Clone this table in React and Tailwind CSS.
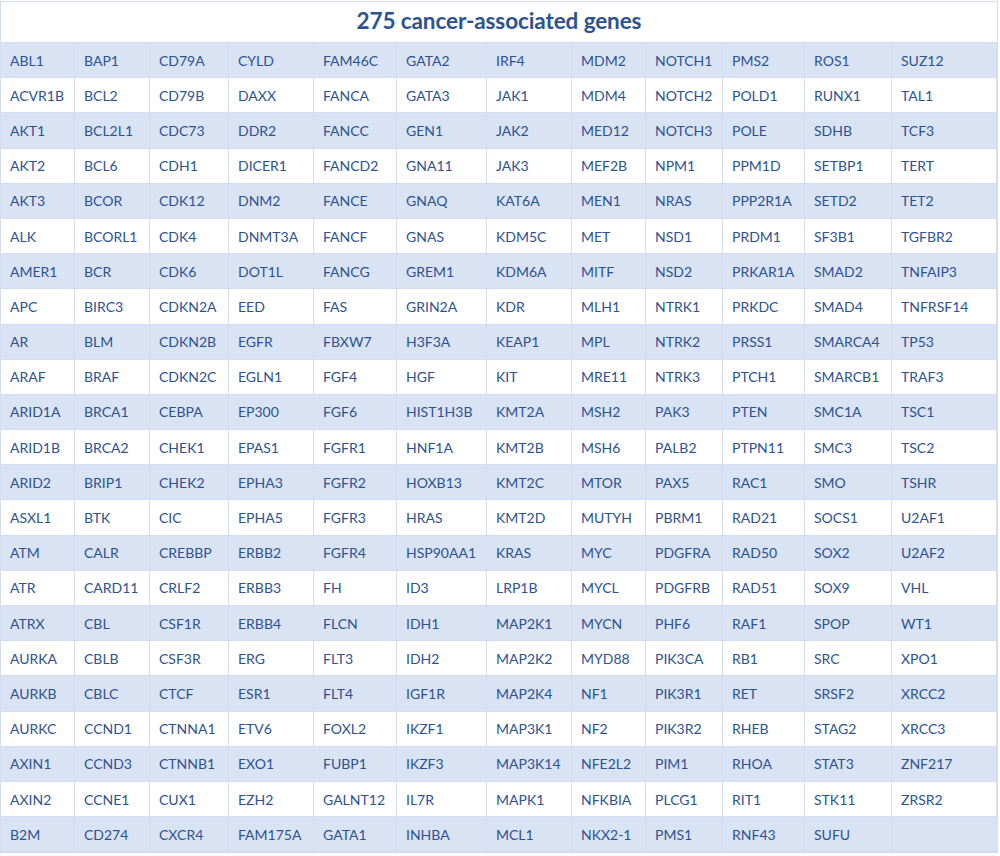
const genes = `ABL1 BAP1 CD79A CYLD FAM46C GATA2 IRF4 MDM2 NOTCH1 PMS2 ROS1 SUZ12
ACVR1B BCL2 CD79B DAXX FANCA GATA3 JAK1 MDM4 NOTCH2 POLD1 RUNX1 TAL1
AKT1 BCL2L1 CDC73 DDR2 FANCC GEN1 JAK2 MED12 NOTCH3 POLE SDHB TCF3
AKT2 BCL6 CDH1 DICER1 FANCD2 GNA11 JAK3 MEF2B NPM1 PPM1D SETBP1 TERT
AKT3 BCOR CDK12 DNM2 FANCE GNAQ KAT6A MEN1 NRAS PPP2R1A SETD2 TET2
ALK BCORL1 CDK4 DNMT3A FANCF GNAS KDM5C MET NSD1 PRDM1 SF3B1 TGFBR2
AMER1 BCR CDK6 DOT1L FANCG GREM1 KDM6A MITF NSD2 PRKAR1A SMAD2 TNFAIP3
APC BIRC3 CDKN2A EED FAS GRIN2A KDR MLH1 NTRK1 PRKDC SMAD4 TNFRSF14
AR BLM CDKN2B EGFR FBXW7 H3F3A KEAP1 MPL NTRK2 PRSS1 SMARCA4 TP53
ARAF BRAF CDKN2C EGLN1 FGF4 HGF KIT MRE11 NTRK3 PTCH1 SMARCB1 TRAF3
ARID1A BRCA1 CEBPA EP300 FGF6 HIST1H3B KMT2A MSH2 PAK3 PTEN SMC1A TSC1
ARID1B BRCA2 CHEK1 EPAS1 FGFR1 HNF1A KMT2B MSH6 PALB2 PTPN11 SMC3 TSC2
ARID2 BRIP1 CHEK2 EPHA3 FGFR2 HOXB13 KMT2C MTOR PAX5 RAC1 SMO TSHR
ASXL1 BTK CIC EPHA5 FGFR3 HRAS KMT2D MUTYH PBRM1 RAD21 SOCS1 U2AF1
ATM CALR CREBBP ERBB2 FGFR4 HSP90AA1 KRAS MYC PDGFRA RAD50 SOX2 U2AF2
ATR CARD11 CRLF2 ERBB3 FH ID3 LRP1B MYCL PDGFRB RAD51 SOX9 VHL
ATRX CBL CSF1R ERBB4 FLCN IDH1 MAP2K1 MYCN PHF6 RAF1 SPOP WT1
AURKA CBLB CSF3R ERG FLT3 IDH2 MAP2K2 MYD88 PIK3CA RB1 SRC XPO1
AURKB CBLC CTCF ESR1 FLT4 IGF1R MAP2K4 NF1 PIK3R1 RET SRSF2 XRCC2
AURKC CCND1 CTNNA1 ETV6 FOXL2 IKZF1 MAP3K1 NF2 PIK3R2 RHEB STAG2 XRCC3
AXIN1 CCND3 CTNNB1 EXO1 FUBP1 IKZF3 MAP3K14 NFE2L2 PIM1 RHOA STAT3 ZNF217
AXIN2 CCNE1 CUX1 EZH2 GALNT12 IL7R MAPK1 NFKBIA PLCG1 RIT1 STK11 ZRSR2
B2M CD274 CXCR4 FAM175A GATA1 INHBA MCL1 NKX2-1 PMS1 RNF43 SUFU -`
  .split('\n')
  .map((line) => line.split(' ').map((g) => (g === '-' ? '' : g)));

export default function App() {
  return (
    <div className="w-[1000px] h-[856px] bg-white pt-px" style={{ fontFamily: 'Lato, "Open Sans", sans-serif' }}>
      <div className="w-[998px] border border-[#d3ddf0] text-[#2c5296]">
        {/* Title */}
        <div className="h-[41px] flex items-center justify-center pb-[3px] border-b border-[#d3ddf0]">
          <h1 className="text-[22.5px] font-bold tracking-[-0.1px]">275 cancer-associated genes</h1>
        </div>

        {/* Gene grid */}
        <div className="grid grid-cols-[74px_75px_79px_85px_83px_90px_85px_74px_77px_82px_87px_1fr]">
          {genes.map((row, i) =>
            row.map((gene, j) => (
              <div
                key={`${i}-${j}`}
                className={`h-[35.2px] flex items-center pl-[9px] text-[14px] border-b border-r border-[#d3ddf0] last:border-r-0 ${
                  i % 2 === 0 ? 'bg-[#dae3f3]' : 'bg-white'
                }`}
              >
                {gene}
              </div>
            ))
          )}
        </div>
      </div>
    </div>
  );
}
